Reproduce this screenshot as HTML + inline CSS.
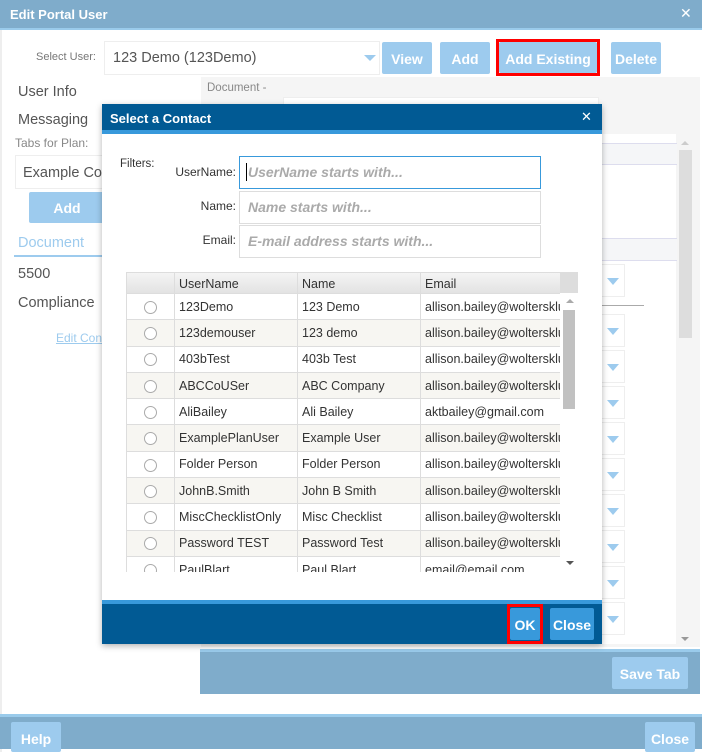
<!DOCTYPE html>
<html><head><meta charset="utf-8"><style>
*{box-sizing:border-box;margin:0;padding:0}
body{width:702px;height:752px;overflow:hidden;background:#fff;font-family:"Liberation Sans","DejaVu Sans",sans-serif;position:relative;color:#555}
.a{position:absolute}
.btn{position:absolute;background:#9DCBEE;color:#fff;font-weight:bold;font-size:14px;text-align:center;border-radius:2px}
.dd{position:absolute;left:600px;width:25px;height:33px;border:1px solid #eee;border-left:none;background:#fff}
.dd:after{content:"";position:absolute;left:7px;top:13px;border-left:6px solid transparent;border-right:6px solid transparent;border-top:7px solid #9DCBEE}
table{border-collapse:collapse;font-size:12.5px;color:#333}
td{border:1px solid #ddd;height:26.3px;padding:0 4px;white-space:nowrap;overflow:hidden;line-height:14px}
tr.h td{height:21px;padding-top:2px}
td.r{width:48px;text-align:center}
.rad{display:inline-block;width:13px;height:13px;border:1px solid #aaa;border-radius:50%;background:#fff;vertical-align:middle}
tr.e td{background:#F7F6F2}
.inp{position:absolute;left:239px;width:302px;height:33px;border:1px solid #ddd;font-style:italic;font-weight:bold;color:#aaa;font-size:14px;padding:7px 8px}
.lbl{position:absolute;right:466px;font-size:12px;color:#333}
</style></head><body>
<div class="a" style="left:0;top:0;width:702px;height:28px;background:#7FACCB"></div>
<div class="a" style="left:0;top:28px;width:702px;height:2px;background:#9ACBEB"></div>
<div class="a" style="left:10px;top:7px;color:#fff;font-weight:bold;font-size:13px">Edit Portal User</div>
<div class="a" style="left:680px;top:5px;color:#fff;font-weight:bold;font-size:14px">✕</div>
<div class="a" style="left:0;top:30px;width:2px;height:722px;background:#eee"></div>

<div class="a" style="left:36px;top:51px;font-size:11px;color:#777">Select User:</div>
<div class="a" style="left:104px;top:41px;width:276px;height:34px;border:1px solid #eee;background:#fff;font-size:14.5px;padding:8px 8px;color:#555">123 Demo (123Demo)</div>
<div class="a" style="left:364px;top:55px;border-left:6px solid transparent;border-right:6px solid transparent;border-top:6px solid #9DCBEE"></div>
<div class="btn" style="left:382px;top:42px;width:50px;height:32px;line-height:34px">View</div>
<div class="btn" style="left:440px;top:42px;width:50px;height:32px;line-height:34px">Add</div>
<div class="a" style="left:496px;top:39px;width:104px;height:37px;border:3px solid #f00"></div>
<div class="btn" style="left:499px;top:42px;width:98px;height:31px;line-height:34px">Add Existing</div>
<div class="btn" style="left:611px;top:42px;width:50px;height:32px;line-height:34px">Delete</div>

<div class="a" style="left:201px;top:77px;width:499px;height:570px;background:#F5F5F5"></div>
<div class="a" style="left:207px;top:82px;font-size:11.5px;color:#888">Document -</div>
<div class="a" style="left:283px;top:97px;width:316px;height:34px;background:#fff;border:1px solid #eee"></div>
<div class="a" style="left:601px;top:134px;width:75px;height:510px;background:#fff"></div>
<div class="a" style="left:601px;top:143px;width:76px;height:22px;background:#F5F6F8;border-top:1px solid #dde;border-bottom:1px solid #dde"></div>
<div class="a" style="left:601px;top:238px;width:76px;height:23px;background:#F5F6F8;border-top:1px solid #dde;border-bottom:1px solid #dde"></div>
<div class="a" style="left:601px;top:305px;width:43px;height:1px;background:#aaa"></div>
<div class="dd" style="top:264px"></div>
<div class="dd" style="top:314px"></div><div class="dd" style="top:350px"></div><div class="dd" style="top:386px"></div>
<div class="dd" style="top:422px"></div><div class="dd" style="top:458px"></div><div class="dd" style="top:494px"></div>
<div class="dd" style="top:530px"></div><div class="dd" style="top:566px"></div><div class="dd" style="top:602px"></div>
<div class="a" style="left:677px;top:134px;width:16px;height:512px;background:#F5F5F5"></div>
<div class="a" style="left:679px;top:150px;width:13px;height:188px;background:#ddd"></div>
<div class="a" style="left:681px;top:141px;border-left:4px solid transparent;border-right:4px solid transparent;border-bottom:4px solid #ccc"></div>
<div class="a" style="left:681px;top:637px;border-left:4px solid transparent;border-right:4px solid transparent;border-top:4px solid #999"></div>

<div class="a" style="left:200px;top:649px;width:500px;height:4px;background:#9ACBEB"></div>
<div class="a" style="left:200px;top:652px;width:500px;height:42px;background:#7FACCB"></div>
<div class="btn" style="left:612px;top:657px;width:76px;height:32px;line-height:34px">Save Tab</div>

<div class="a" style="left:18px;top:84px;font-size:14.5px">User Info</div>
<div class="a" style="left:18px;top:112px;font-size:14.5px">Messaging</div>
<div class="a" style="left:15px;top:136px;font-size:12px;color:#888">Tabs for Plan:</div>
<div class="a" style="left:15px;top:155px;width:100px;height:34px;border:1px solid #eee;font-size:14.5px;padding:9px 7px;white-space:nowrap;overflow:hidden">Example Co</div>
<div class="btn" style="left:29px;top:192px;width:76px;height:31px;line-height:33px">Add</div>
<div class="a" style="left:18px;top:235px;font-size:14.5px;color:#9DCBEE">Document</div>
<div class="a" style="left:14px;top:255px;width:90px;height:2px;background:#9DCBEE"></div>
<div class="a" style="left:18px;top:266px;font-size:14.5px">5500</div>
<div class="a" style="left:18px;top:295px;font-size:14.5px">Compliance</div>
<div class="a" style="left:56px;top:331px;font-size:12px;color:#9DCBEE;text-decoration:underline">Edit Con</div>

<div class="a" style="left:0;top:714px;width:702px;height:3px;background:#9ACBEB"></div>
<div class="a" style="left:0;top:717px;width:702px;height:32px;background:#7FACCB"></div>
<div class="btn" style="left:11px;top:722px;width:50px;height:30px;line-height:34px">Help</div>
<div class="btn" style="left:645px;top:722px;width:50px;height:30px;line-height:34px">Close</div>

<!-- modal -->
<div class="a" style="left:102px;top:104px;width:500px;height:540px;background:#fff;box-shadow:0 2px 6px rgba(0,0,0,.3)"></div>
<div class="a" style="left:102px;top:104px;width:500px;height:26px;background:#015A94"></div>
<div class="a" style="left:102px;top:130px;width:500px;height:4px;background:#3899DB"></div>
<div class="a" style="left:110px;top:111px;color:#fff;font-weight:bold;font-size:13px">Select a Contact</div>
<div class="a" style="left:581px;top:109px;color:#fff;font-weight:bold;font-size:13px">✕</div>
<div class="a" style="left:120px;top:158px;font-size:11.5px;color:#333">Filters:</div>
<div class="lbl" style="top:165px">UserName:</div>
<div class="lbl" style="top:199px">Name:</div>
<div class="lbl" style="top:233px">Email:</div>
<div class="inp" style="top:156px;border-color:#3899DB">UserName starts with...</div>
<div class="a" style="left:246px;top:163px;width:1px;height:18px;background:#000"></div>
<div class="inp" style="top:191px">Name starts with...</div>
<div class="inp" style="top:225px">E-mail address starts with...</div>

<div class="a" style="left:126px;top:272px;width:452px;height:300px;overflow:hidden">
<table style="width:434px;table-layout:fixed">
<colgroup><col style="width:48px"><col style="width:123px"><col style="width:123px"><col style="width:140px"></colgroup>
<tr class="h" style="background:linear-gradient(#f4f4f4,#e2e2e2)"><td></td><td>UserName</td><td>Name</td><td>Email</td></tr>
<tr><td class="r"><span class="rad"></span></td><td>123Demo</td><td>123 Demo</td><td>allison.bailey@wolterskluwer.com</td></tr>
<tr class="e"><td class="r"><span class="rad"></span></td><td>123demouser</td><td>123 demo</td><td>allison.bailey@wolterskluwer.com</td></tr>
<tr><td class="r"><span class="rad"></span></td><td>403bTest</td><td>403b Test</td><td>allison.bailey@wolterskluwer.com</td></tr>
<tr class="e"><td class="r"><span class="rad"></span></td><td>ABCCoUSer</td><td>ABC Company</td><td>allison.bailey@wolterskluwer.com</td></tr>
<tr><td class="r"><span class="rad"></span></td><td>AliBailey</td><td>Ali Bailey</td><td>aktbailey@gmail.com</td></tr>
<tr class="e"><td class="r"><span class="rad"></span></td><td>ExamplePlanUser</td><td>Example User</td><td>allison.bailey@wolterskluwer.com</td></tr>
<tr><td class="r"><span class="rad"></span></td><td>Folder Person</td><td>Folder Person</td><td>allison.bailey@wolterskluwer.com</td></tr>
<tr class="e"><td class="r"><span class="rad"></span></td><td>JohnB.Smith</td><td>John B Smith</td><td>allison.bailey@wolterskluwer.com</td></tr>
<tr><td class="r"><span class="rad"></span></td><td>MiscChecklistOnly</td><td>Misc Checklist</td><td>allison.bailey@wolterskluwer.com</td></tr>
<tr class="e"><td class="r"><span class="rad"></span></td><td>Password TEST</td><td>Password Test</td><td>allison.bailey@wolterskluwer.com</td></tr>
<tr><td class="r"><span class="rad"></span></td><td>PaulBlart</td><td>Paul Blart</td><td>email@email.com</td></tr>
</table>
<div class="a" style="left:434px;top:0;width:18px;height:21px;background:#ddd"></div>
<div class="a" style="left:434px;top:21px;width:18px;height:279px;background:#fff"></div>
<div class="a" style="left:437px;top:38px;width:12px;height:99px;background:#c1c1c1"></div>
<div class="a" style="left:440px;top:27px;border-left:4px solid transparent;border-right:4px solid transparent;border-bottom:4px solid #aaa"></div>
<div class="a" style="left:440px;top:289px;border-left:4px solid transparent;border-right:4px solid transparent;border-top:4px solid #555"></div>
</div>

<div class="a" style="left:102px;top:600px;width:500px;height:4px;background:#3899DB"></div>
<div class="a" style="left:102px;top:604px;width:500px;height:40px;background:#015A94"></div>
<div class="a" style="left:507px;top:604px;width:36px;height:40px;border:3px solid #f00"></div>
<div class="btn" style="left:510px;top:608px;width:30px;height:32px;line-height:34px;background:#3899DB">OK</div>
<div class="btn" style="left:550px;top:608px;width:44px;height:32px;line-height:34px;background:#3899DB">Close</div>
</body></html>
